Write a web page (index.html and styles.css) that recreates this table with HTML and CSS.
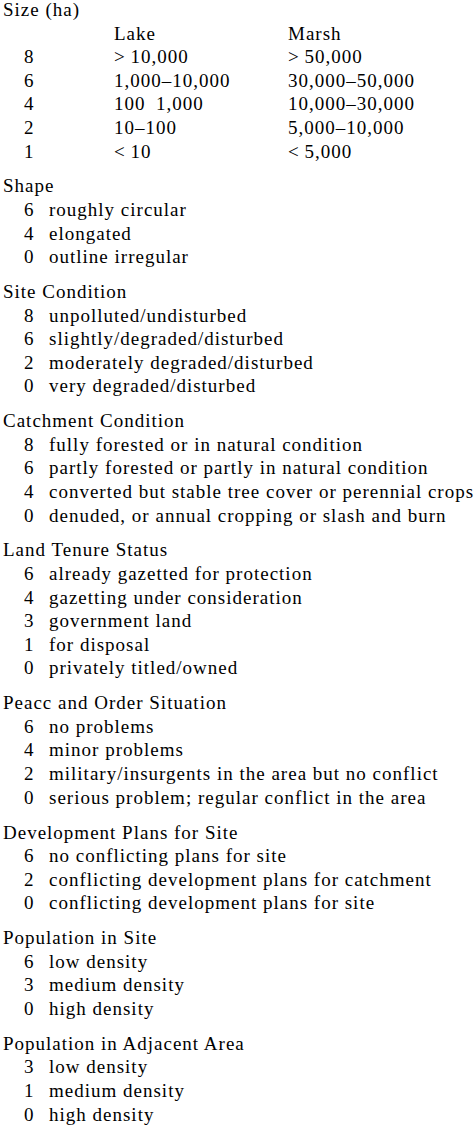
FILE: index.html
```html
<!DOCTYPE html>
<html lang="en">
<head>
<meta charset="utf-8">
<title>Site scoring criteria</title>
<link rel="stylesheet" href="styles.css">
</head>
<body>
<main class="criteria">
  <section class="group">
    <div class="head">Size (ha)</div>
    <div class="size-table">
      <span></span><span>Lake</span><span>Marsh</span>
      <span>8</span><span>&gt;&#8201;10,000</span><span>&gt;&#8201;50,000</span>
      <span>6</span><span>1,000–10,000</span><span>30,000–50,000</span>
      <span>4</span><span>100&nbsp;&#8201;1,000</span><span>10,000–30,000</span>
      <span>2</span><span>10–100</span><span>5,000–10,000</span>
      <span>1</span><span>&lt;&#8201;10</span><span>&lt;&#8201;5,000</span>
    </div>
  </section>

  <section class="group">
    <div class="head">Shape</div>
    <ul class="items">
      <li><span class="n">6</span><span>roughly circular</span></li>
      <li><span class="n">4</span><span>elongated</span></li>
      <li><span class="n">0</span><span>outline irregular</span></li>
    </ul>
  </section>

  <section class="group">
    <div class="head">Site Condition</div>
    <ul class="items">
      <li><span class="n">8</span><span>unpolluted/undisturbed</span></li>
      <li><span class="n">6</span><span>slightly/degraded/disturbed</span></li>
      <li><span class="n">2</span><span>moderately degraded/disturbed</span></li>
      <li><span class="n">0</span><span>very degraded/disturbed</span></li>
    </ul>
  </section>

  <section class="group">
    <div class="head">Catchment Condition</div>
    <ul class="items">
      <li><span class="n">8</span><span>fully forested or in natural condition</span></li>
      <li><span class="n">6</span><span>partly forested or partly in natural condition</span></li>
      <li><span class="n">4</span><span>converted but stable tree cover or perennial crops</span></li>
      <li><span class="n">0</span><span>denuded, or annual cropping or slash and burn</span></li>
    </ul>
  </section>

  <section class="group">
    <div class="head">Land Tenure Status</div>
    <ul class="items">
      <li><span class="n">6</span><span>already gazetted for protection</span></li>
      <li><span class="n">4</span><span>gazetting under consideration</span></li>
      <li><span class="n">3</span><span>government land</span></li>
      <li><span class="n">1</span><span>for disposal</span></li>
      <li><span class="n">0</span><span>privately titled/owned</span></li>
    </ul>
  </section>

  <section class="group">
    <div class="head">Peacc and Order Situation</div>
    <ul class="items">
      <li><span class="n">6</span><span>no problems</span></li>
      <li><span class="n">4</span><span>minor problems</span></li>
      <li><span class="n">2</span><span>military/insurgents in the area but no conflict</span></li>
      <li><span class="n">0</span><span>serious problem; regular conflict in the area</span></li>
    </ul>
  </section>

  <section class="group">
    <div class="head">Development Plans for Site</div>
    <ul class="items">
      <li><span class="n">6</span><span>no conflicting plans for site</span></li>
      <li><span class="n">2</span><span>conflicting development plans for catchment</span></li>
      <li><span class="n">0</span><span>conflicting development plans for site</span></li>
    </ul>
  </section>

  <section class="group">
    <div class="head">Population in Site</div>
    <ul class="items">
      <li><span class="n">6</span><span>low density</span></li>
      <li><span class="n">3</span><span>medium density</span></li>
      <li><span class="n">0</span><span>high density</span></li>
    </ul>
  </section>

  <section class="group">
    <div class="head">Population in Adjacent Area</div>
    <ul class="items">
      <li><span class="n">3</span><span>low density</span></li>
      <li><span class="n">1</span><span>medium density</span></li>
      <li><span class="n">0</span><span>high density</span></li>
    </ul>
  </section>
</main>
</body>
</html>
```

FILE: styles.css
```css
html, body {
  margin: 0;
  padding: 0;
  background: #ffffff;
}

body {
  font-family: "Liberation Serif", "DejaVu Serif", serif;
  font-size: 19px;
  line-height: 23.6px;
  letter-spacing: 1px;
  color: #000000;
  width: 474px;
  overflow: hidden;
}

.criteria {
  display: flex;
  flex-direction: column;
  gap: 11.25px;
  padding-left: 3px;
  margin-top: -2px;
}

.group {
  display: flex;
  flex-direction: column;
}

.head {
  white-space: nowrap;
}

.size-table {
  display: grid;
  grid-template-columns: 90px 174px 1fr;
  padding-left: 21px;
  white-space: nowrap;
}

.items {
  list-style: none;
  margin: 0;
  padding: 0 0 0 21px;
}

.items li {
  display: grid;
  grid-template-columns: 25px 1fr;
  white-space: nowrap;
}
```
